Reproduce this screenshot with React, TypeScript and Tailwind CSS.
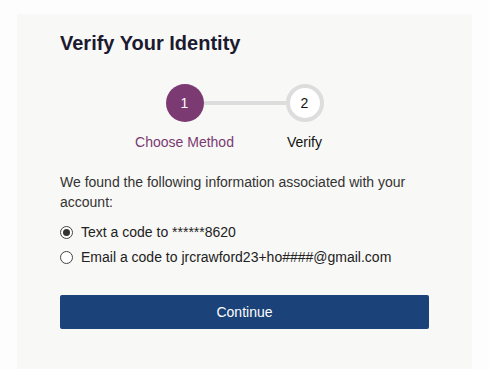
import React from "react";

export default function App() {
  return (
    <div className="min-h-[369px] bg-[#fdfdfd] pt-[14px] pl-[17px]" style={{ fontFamily: '"Liberation Sans", Arial, sans-serif' }}>
      <div className="w-[455px] min-h-[355px] bg-[#f8f8f6] px-[43px] pt-[17px]">
        <h1 className="text-[20px] leading-[24px] font-bold text-[#1b1a30]">Verify Your Identity</h1>

        <div className="mt-[29px] flex items-center justify-center">
          <div className="w-[38px] h-[38px] rounded-full bg-[#7b3a72] flex items-center justify-center text-white text-[14px]">1</div>
          <div className="w-[82px] h-[4px] bg-[#dddddd]" />
          <div className="w-[38px] h-[38px] rounded-full bg-white border-[4px] border-[#dddddd] flex items-center justify-center text-[#111] text-[14px]">2</div>
        </div>
        <div className="mt-[10px] flex justify-center text-[14px] leading-[20px]">
          <div className="w-[120px] text-center text-[#7b3a72]">Choose Method</div>
          <div className="w-[120px] text-center text-[#111]">Verify</div>
        </div>

        <p className="mt-[20px] text-[14px] leading-[20px] text-[#333]">
          We found the following information associated with your account:
        </p>

        <div className="mt-[10px] flex flex-col gap-[5px] text-[14px] leading-[20px] text-[#222]">
          <label className="flex items-center gap-[8px]">
            <span className="w-[13px] h-[13px] rounded-full border border-[#444] bg-white flex items-center justify-center">
              <span className="w-[7px] h-[7px] rounded-full bg-[#333]" />
            </span>
            Text a code to ******8620
          </label>
          <label className="flex items-center gap-[8px]">
            <span className="w-[13px] h-[13px] rounded-full border border-[#444] bg-white" />
            Email a code to jrcrawford23+ho####@gmail.com
          </label>
        </div>

        <button className="mt-[28px] w-full h-[34px] rounded-[2px] bg-[#1b4279] text-white text-[14px] flex items-center justify-center">
          Continue
        </button>
      </div>
    </div>
  );
}
